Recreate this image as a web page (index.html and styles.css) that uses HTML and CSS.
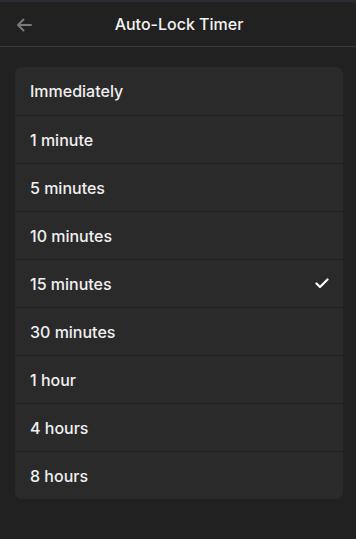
FILE: index.html
```html
<!DOCTYPE html>
<html>
<head>
<meta charset="utf-8">
<link rel="stylesheet" href="styles.css">
</head>
<body>
<div class="topstrip"></div>
<header class="header">
  <button class="back" aria-label="Back">
    <svg width="16" height="14" viewBox="0 0 16 14"><path d="M15 7H2M7.5 1.5L2 7l5.5 5.5" fill="none" stroke="#7a7a7a" stroke-width="2" stroke-linecap="round" stroke-linejoin="round"/></svg>
  </button>
  <h1 class="title">Auto-Lock Timer</h1>
</header>
<main class="content">
  <ul class="list">
    <li class="item">Immediately</li>
    <li class="item">1 minute</li>
    <li class="item">5 minutes</li>
    <li class="item">10 minutes</li>
    <li class="item selected">15 minutes
      <svg class="check" width="14" height="11" viewBox="0 0 14 11"><path d="M1.5 5.5l3.5 3.5 7.5-7.5" fill="none" stroke="#ffffff" stroke-width="2.2" stroke-linecap="round" stroke-linejoin="round"/></svg>
    </li>
    <li class="item">30 minutes</li>
    <li class="item">1 hour</li>
    <li class="item">4 hours</li>
    <li class="item">8 hours</li>
  </ul>
</main>
</body>
</html>
```
FILE: styles.css
```css
* { box-sizing: border-box; }
html, body { margin: 0; padding: 0; }
body {
  background: #212121;
  color: #ededed;
  font-family: Inter, "Noto Sans", sans-serif;
  width: 356px;
  height: 539px;
  overflow: hidden;
}
.topstrip {
  height: 2px;
  background: #2a2c33;
}
.header {
  height: 45px;
  display: flex;
  align-items: center;
  justify-content: center;
  position: relative;
  border-bottom: 1px solid #3a3a3a;
}
.back {
  position: absolute;
  left: 16px;
  top: 16px;
  padding: 0;
  border: 0;
  background: none;
  display: flex;
}
.title {
  margin: 0 0 0 2px;
  font-size: 16px;
  font-weight: 500;
  color: #f2f2f2;
}
.content {
  padding: 20px 13px 0 15px;
}
.list {
  list-style: none;
  margin: 0;
  padding: 0;
  background: #2a2a2a;
  border-radius: 7px;
  overflow: hidden;
}
.item {
  height: 48px;
  display: flex;
  align-items: center;
  justify-content: space-between;
  padding: 0 14px 0 15px;
  font-size: 16px;
  font-weight: 500;
  color: #f0f0f0;
  border-top: 1px solid #1f1f1f;
}
.item:first-child { border-top: 0; }
.check { display: block; }
```
